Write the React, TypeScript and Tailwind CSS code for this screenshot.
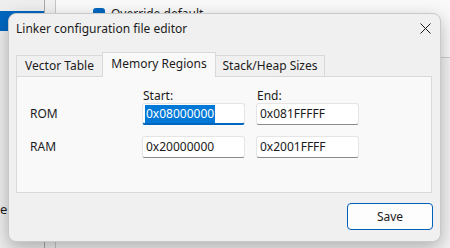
import React from "react";

function Field({ value, focused }: { value: string; focused?: boolean }) {
  if (focused) {
    return (
      <div className="h-[22px] w-[103px] rounded-[3px] border border-[#e5e5e5] border-b-2 border-b-[#0067c0] bg-white pl-[2px] pt-[1px] flex items-start">
        <span className="inline-block h-[18px] leading-[18px] bg-[#0078d7] text-white px-[1px]">{value}</span>
      </div>
    );
  }
  return (
    <div className="h-[22px] w-[103px] rounded-[3px] border border-[#e5e5e5] border-b-[#8a8a8a] bg-white pl-[3px] pt-[1px] leading-[18px] text-[#1a1a1a]">
      {value}
    </div>
  );
}

export default function App() {
  return (
    <div className="relative w-[450px] h-[248px] overflow-hidden bg-[#f3f3f3] font-['Noto_Sans',sans-serif] text-[12px] text-[#1b1b1b]">
      {/* background application */}
      <div className="flex h-full">
        <div className="w-[44px] flex flex-col bg-[#eeeeee]">
          <div className="h-[11px]" />
          <div className="h-[20px] bg-[#0067c0]" />
          <div className="flex-1" />
          <div className="h-[26px] leading-[26px] text-[13px] text-[#1b1b1b] mb-[26px]">e</div>
        </div>
        <div className="w-px bg-[#a9a9a9]" />
        <div className="w-[10px] bg-[#f0f0f0]" />
        <div className="w-px bg-[#c6c6c6]" />
        <div className="flex-1 flex flex-col bg-[#f9f9f9]">
          <div className="h-[22px] flex items-center pl-[37px] gap-[6px]">
            <div className="w-[12px] h-[12px] rounded-[3px] bg-[#0067c0] mt-[6px]" />
            <span className="text-[12px] mt-[5px]">Override default</span>
          </div>
          <div className="h-[35px]" />
          <div className="h-px bg-[#cfcfcf]" />
          <div className="flex-1 bg-[#f3f3f3]" />
        </div>
      </div>

      {/* dialog window */}
      <div className="absolute left-[8px] top-[13px] w-[433px] h-[229px] rounded-[8px] border border-[#c9c9c9] bg-[#f0f0f0] shadow-[0_6px_18px_rgba(0,0,0,0.28)] flex flex-col">
        <div className="h-[28px] flex items-center justify-between pl-[7px] pr-[9px]">
          <span className="text-[12px] mt-[1px]">Linker configuration file editor</span>
          <svg width="11" height="11" viewBox="0 0 11 11" className="mt-[1px]">
            <path d="M0.5 0.5 L10.5 10.5 M10.5 0.5 L0.5 10.5" stroke="#1b1b1b" strokeWidth="1" />
          </svg>
        </div>
        <div className="flex flex-col pl-[7px] pr-[8px] mt-[9px]">
          <div className="flex items-end h-[25px] whitespace-nowrap">
            <div className="h-[21px] flex items-center border border-[#d9d9d9] border-b-0 bg-[#f0f0f0] w-[87px] justify-center">
              Vector Table
            </div>
            <div className="h-[25px] flex items-start pt-[2px] border border-[#d9d9d9] border-b-0 -mx-px bg-[#f9f9f9] w-[114px] justify-center relative z-10 -mb-px">
              Memory Regions
            </div>
            <div className="h-[21px] flex items-center border border-[#d9d9d9] border-b-0 bg-[#f0f0f0] w-[110px] justify-center">
              Stack/Heap Sizes
            </div>
          </div>
          <div className="h-[117px] border border-[#d9d9d9] bg-[#f9f9f9] pl-[13px] pt-[11px]">
            <div className="grid grid-cols-[101px_103px_103px] gap-x-[11px] gap-y-0">
              <div />
              <div className="h-[15px] leading-[15px] pl-[1px]">Start:</div>
              <div className="h-[15px] leading-[15px] pl-[1px]">End:</div>
              <div className="h-[22px] flex items-center">ROM</div>
              <Field value="0x08000000" focused />
              <Field value="0x081FFFFF" />
              <div className="h-[11px] col-span-3" />
              <div className="h-[22px] flex items-center">RAM</div>
              <Field value="0x20000000" />
              <Field value="0x2001FFFF" />
            </div>
          </div>
        </div>
        <div className="flex-1 flex items-start justify-end pr-[7px] pt-[10px]">
          <button className="w-[86px] h-[27px] rounded-[4px] border border-[#005fb8] bg-[#fdfdfd] text-[12px] text-[#1b1b1b]">
            Save
          </button>
        </div>
      </div>
    </div>
  );
}
